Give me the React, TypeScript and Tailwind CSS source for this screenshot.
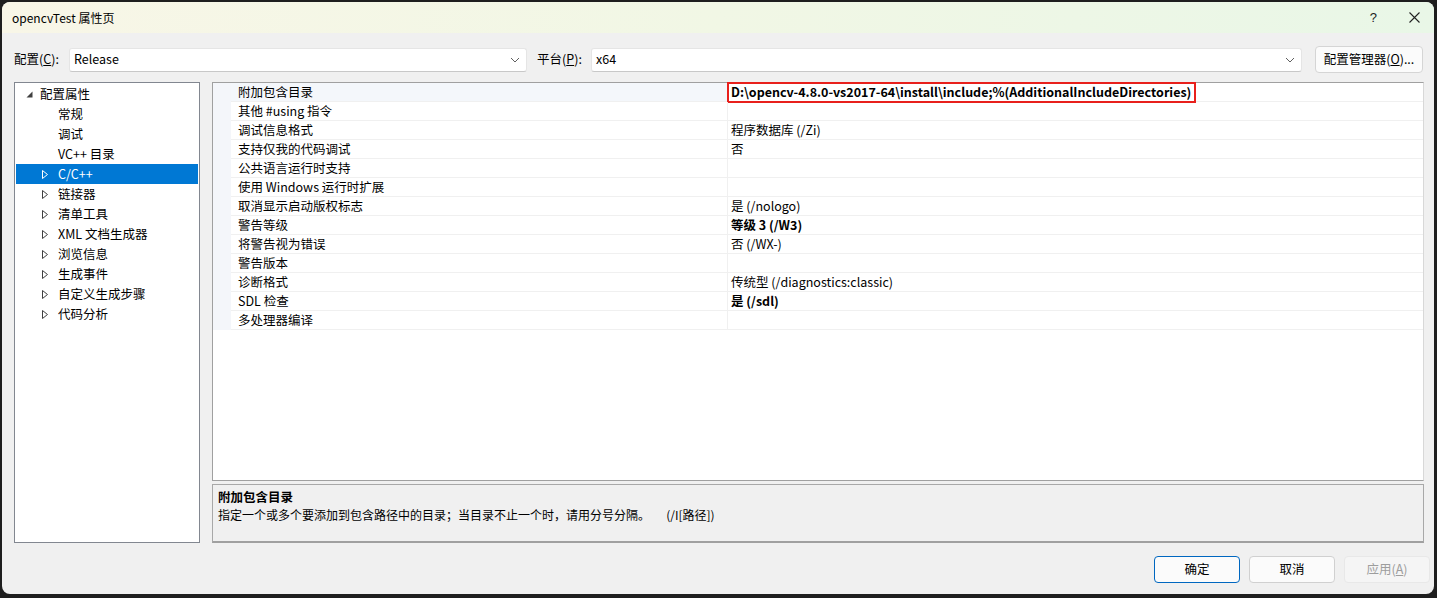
import React from 'react'

const font = { fontFamily: '"Noto Sans CJK SC", "Liberation Sans", sans-serif' }

const treeItems = [
  { label: '常规', level: 1 },
  { label: '调试', level: 1 },
  { label: 'VC++ 目录', level: 1 },
  { label: 'C/C++', level: 1, arrow: true, selected: true },
  { label: '链接器', level: 1, arrow: true },
  { label: '清单工具', level: 1, arrow: true },
  { label: 'XML 文档生成器', level: 1, arrow: true },
  { label: '浏览信息', level: 1, arrow: true },
  { label: '生成事件', level: 1, arrow: true },
  { label: '自定义生成步骤', level: 1, arrow: true },
  { label: '代码分析', level: 1, arrow: true },
]

const props: { name: string; value: string; bold?: boolean }[] = [
  { name: '附加包含目录', value: 'D:\\opencv-4.8.0-vs2017-64\\install\\include;%(AdditionalIncludeDirectories)', bold: true },
  { name: '其他 #using 指令', value: '' },
  { name: '调试信息格式', value: '程序数据库 (/Zi)' },
  { name: '支持仅我的代码调试', value: '否' },
  { name: '公共语言运行时支持', value: '' },
  { name: '使用 Windows 运行时扩展', value: '' },
  { name: '取消显示启动版权标志', value: '是 (/nologo)' },
  { name: '警告等级', value: '等级 3 (/W3)', bold: true },
  { name: '将警告视为错误', value: '否 (/WX-)' },
  { name: '警告版本', value: '' },
  { name: '诊断格式', value: '传统型 (/diagnostics:classic)' },
  { name: 'SDL 检查', value: '是 (/sdl)', bold: true },
  { name: '多处理器编译', value: '' },
]

function Chevron() {
  return (
    <svg width="10" height="6" viewBox="0 0 10 6" className="shrink-0">
      <path d="M1 1 L5 5 L9 1" fill="none" stroke="#606060" strokeWidth="1" />
    </svg>
  )
}

function Select({ value, className }: { value: string; className: string }) {
  return (
    <div className={`h-[24px] flex items-center justify-between bg-white border border-[#e5e5e5] border-b-[#c8c8c8] rounded-[3px] pl-[4px] pr-[6px] ${className}`}>
      <span className="text-[12.5px] text-black">{value}</span>
      <Chevron />
    </div>
  )
}

function Btn({ children, primary, disabled }: { children: React.ReactNode; primary?: boolean; disabled?: boolean }) {
  return (
    <div
      className={`w-[86px] h-[27px] flex items-center justify-center rounded-[4px] text-[12.5px] ${
        primary
          ? 'bg-[#fbfbfb] border border-[#0067c0] text-black'
          : disabled
          ? 'bg-[#f5f5f5] border border-[#e8e8e8] text-[#9d9d9d]'
          : 'bg-[#fbfbfb] border border-[#d0d0d0] text-black'
      }`}
    >
      {children}
    </div>
  )
}

export default function App() {
  return (
    <div style={font} className="w-[1437px] h-[598px] bg-[#1e1e1e] pt-[2px] pl-[2px] pr-[3px] pb-[4px] overflow-hidden">
      <div className="h-full w-full rounded-[8px] bg-[#f0f0f0] flex flex-col overflow-hidden">
        {/* title bar */}
        <div className="h-[31px] shrink-0 flex items-center justify-between bg-gradient-to-r from-[#f8f6e7] via-[#f1f7e5] to-[#e9f7e7] pl-[10px] pr-[14px]">
          <span className="text-[12px] text-black">opencvTest 属性页</span>
          <div className="flex items-center gap-[32px]">
            <span className="text-[13px] text-[#222]" style={{ fontFamily: '"Liberation Sans", sans-serif' }}>?</span>
            <svg width="11" height="11" viewBox="0 0 11 11">
              <path d="M0.5 0.5 L10.5 10.5 M10.5 0.5 L0.5 10.5" stroke="#222" strokeWidth="1.1" />
            </svg>
          </div>
        </div>

        {/* config row */}
        <div className="flex items-center pl-[12px] pr-[11px] mt-[13px] h-[27px]">
          <span className="text-[12.5px] text-black w-[55px]">
            配置(<span className="underline">C</span>):
          </span>
          <Select value="Release" className="w-[458px]" />
          <span className="text-[12.5px] text-black ml-[10px] w-[54px]">
            平台(<span className="underline">P</span>):
          </span>
          <Select value="x64" className="w-[711px]" />
          <div className="ml-[13px] w-[108px] h-[27px] flex items-center justify-center bg-[#fbfbfb] border border-[#d5d5d5] rounded-[4px] text-[12.5px] text-black">
            配置管理器(<span className="underline">O</span>)...
          </div>
        </div>

        {/* main */}
        <div className="flex pl-[12px] pr-[10px] mt-[9px] h-[461px] gap-[12px]">
          {/* tree */}
          <div className="w-[186px] shrink-0 bg-white border border-[#828790] pt-[1px] px-[1px]">
            <div className="h-[20px] flex items-center text-[12.5px] text-black">
              <svg width="7" height="7" viewBox="0 0 7 7" className="ml-[10px] mr-[7px]">
                <path d="M6.5 0.5 L6.5 6.5 L0.5 6.5 Z" fill="#404040" />
              </svg>
              配置属性
            </div>
            {treeItems.map((it) => (
              <div
                key={it.label}
                className={`h-[20px] flex items-center text-[12.5px] ${it.selected ? 'bg-[#0078d4] text-white' : 'text-black'}`}
              >
                <span className="w-[42px] flex justify-end pr-[10px]">
                  {it.arrow && (
                    <svg width="6" height="9" viewBox="0 0 6 9">
                      <path d="M0.5 0.5 L5.5 4.5 L0.5 8.5 Z" fill="none" stroke={it.selected ? '#ffffff' : '#404040'} strokeWidth="1" />
                    </svg>
                  )}
                </span>
                {it.label}
              </div>
            ))}
          </div>

          {/* grid + description */}
          <div className="flex-1 flex flex-col gap-[3px]">
            <div className="h-[399px] bg-white border border-[#a0a0a0] border-r-[#d8d8d8] flex flex-col">
              {props.map((p, i) => (
                <div key={p.name} className="flex h-[19px] shrink-0">
                  <div className="w-[18px] shrink-0 bg-[#f4f6fa]" />
                  <div className={`w-[496px] shrink-0 flex items-center pl-[7px] text-[12.5px] text-black border-b border-[#f0f0f0] ${i === 0 ? 'bg-[#f4f7fb]' : ''}`}>
                    {p.name}
                  </div>
                  <div className={`flex-1 relative flex items-center pl-[3px] text-[12.5px] text-black border-l border-b border-[#f0f0f0] ${p.bold ? 'font-bold' : ''}`}>
                    {p.value}
                    {i === 0 && (
                      <div className="absolute left-[-1px] top-[-1px] w-[469px] h-[21px] border-2 border-[#e8201c]" />
                    )}
                  </div>
                </div>
              ))}
            </div>
            <div className="h-[59px] bg-[#f0f0f0] border border-[#a8a8a8] border-b-2 border-b-[#a0a0a0] px-[5px] pt-[3px]">
              <div className="text-[12.5px] font-bold text-black leading-[18px]">附加包含目录</div>
              <div className="text-[12px] text-black leading-[18px] whitespace-pre">指定一个或多个要添加到包含路径中的目录；当目录不止一个时，请用分号分隔。      (/I[路径])</div>
            </div>
          </div>
        </div>

        {/* buttons */}
        <div className="flex justify-end gap-[9px] pr-[4px] mt-[13px]">
          <Btn primary>确定</Btn>
          <Btn>取消</Btn>
          <Btn disabled>应用(<span className="underline">A</span>)</Btn>
        </div>
      </div>
    </div>
  )
}
